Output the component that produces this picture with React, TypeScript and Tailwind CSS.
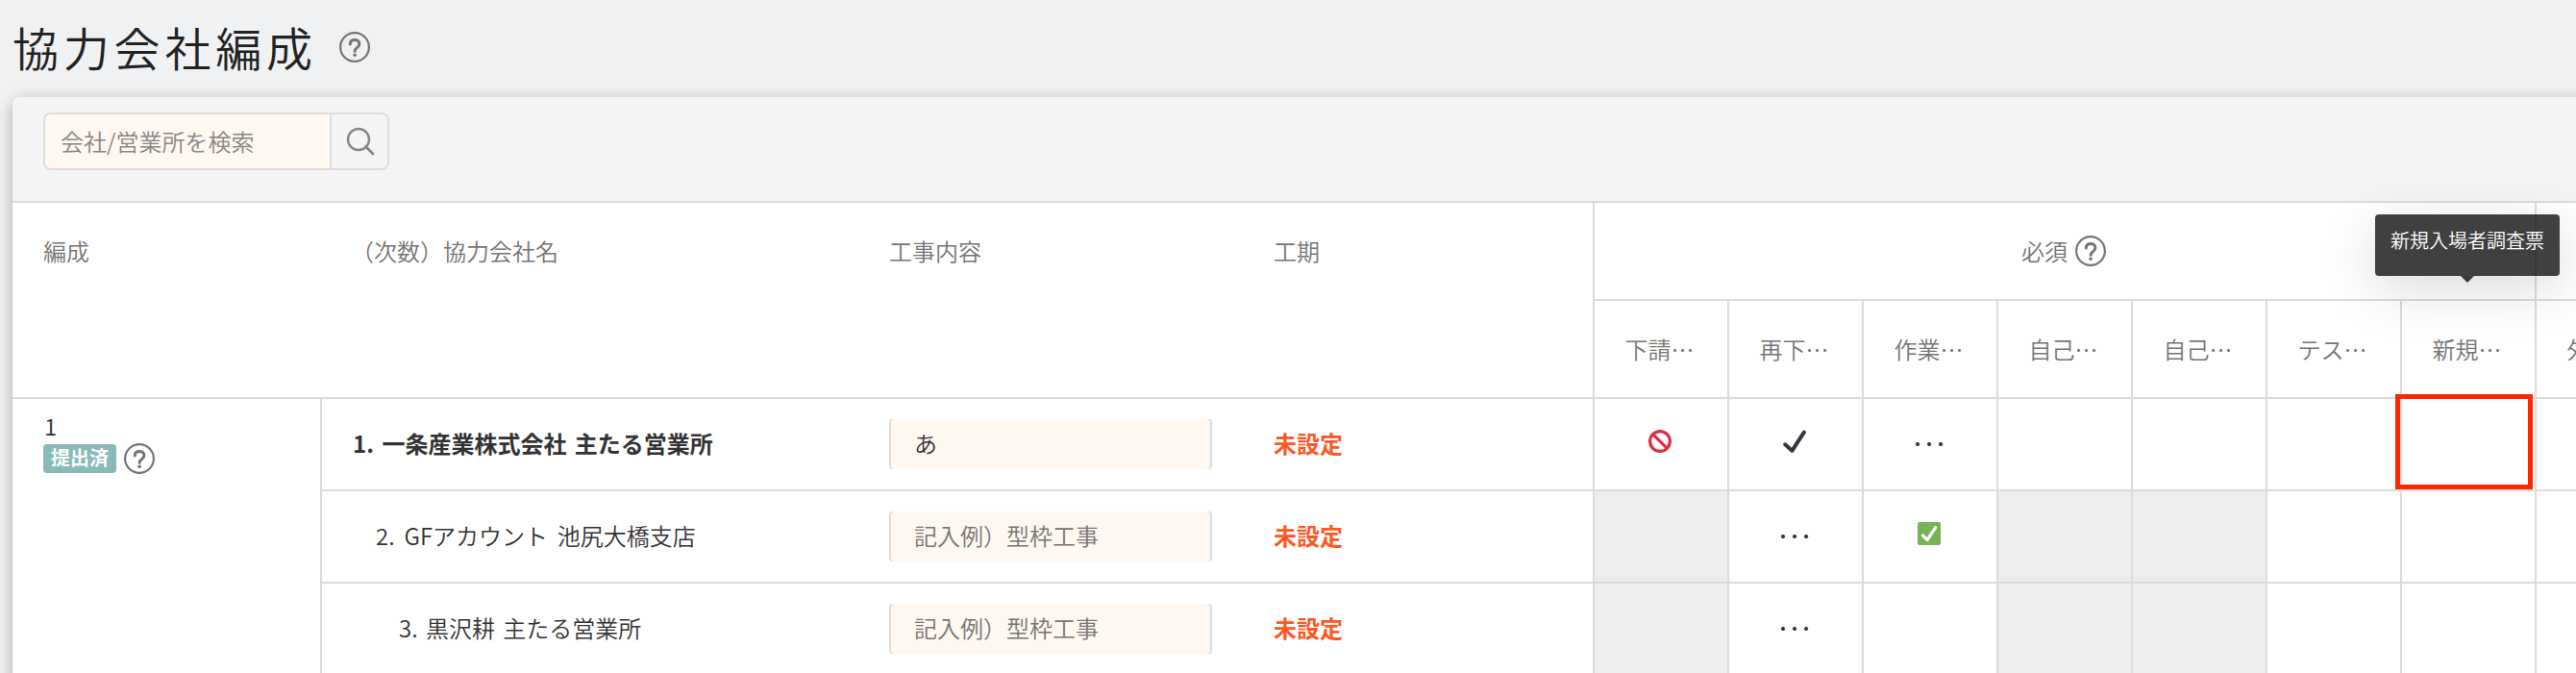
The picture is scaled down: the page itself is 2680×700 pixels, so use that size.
import { ReactNode } from "react"
import { clsx } from "clsx"

type CellValue = "" | "banned" | "check" | "done" | "dots" | "disabled"

type Company = {
  name: string
  level: number
  work: string
  cells: CellValue[]
}

const columns = ["下請…", "再下…", "作業…", "自己…", "自己…", "テス…", "新規…", "外国…"]

const companies: Company[] = [
  {
    name: "1. 一条産業株式会社 主たる営業所",
    level: 0,
    work: "あ",
    cells: ["banned", "check", "dots", "", "", "", "", ""],
  },
  {
    name: "2. GFアカウント 池尻大橋支店",
    level: 1,
    work: "",
    cells: ["disabled", "dots", "done", "disabled", "disabled", "", "", ""],
  },
  {
    name: "3. 黒沢耕 主たる営業所",
    level: 2,
    work: "",
    cells: ["disabled", "dots", "", "disabled", "disabled", "", "", ""],
  },
]

const indent = [
  "pl-8 font-bold [word-spacing:3px]",
  "pl-14 [word-spacing:4.5px]",
  "pl-20 [word-spacing:3px]",
]

const HelpIcon = () => (
  <svg width="32" height="32" viewBox="0 0 32 32" fill="none" className="shrink-0">
    <circle cx="16" cy="16" r="14.9" stroke="#757575" strokeWidth="2.2" />
    <path
      d="M11.3 13c0-2.8 2-4.4 4.8-4.4s4.8 1.6 4.8 4.1c0 2-1 2.9-2.3 3.9-1.5 1.1-2.5 1.8-2.5 3.6"
      stroke="#757575"
      strokeWidth="3"
      strokeLinecap="round"
    />
    <circle cx="16.1" cy="24.3" r="1.8" fill="#757575" />
  </svg>
)

const SearchIcon = () => (
  <svg width="30" height="30" viewBox="0 0 30 30" fill="none" stroke="#868686" strokeWidth="2.4">
    <circle cx="13" cy="13" r="11" />
    <path d="M20.5 20.5 28 28" strokeWidth="2.8" strokeLinecap="round" />
  </svg>
)

const BannedIcon = () => (
  <svg width="24" height="24" viewBox="0 0 24 24" fill="none" stroke="#dd2e44" strokeWidth="3.2">
    <circle cx="12" cy="12" r="10.4" />
    <path d="m4.8 4.8 14.4 14.4" />
  </svg>
)

const CheckIcon = () => (
  <svg width="24" height="24" viewBox="0 0 36 36" fill="#31373d">
    <path d="M34.459 1.375c-1.391-.902-3.248-.506-4.149.884L13.5 28.17l-8.198-7.58c-1.217-1.125-3.114-1.051-4.239.166-1.125 1.216-1.051 3.114.166 4.239l10.764 9.952s.309.266.452.359c.504.328 1.07.484 1.63.484.982 0 1.945-.482 2.52-1.368L35.343 5.524c.902-1.39.506-3.248-.884-4.149z" />
  </svg>
)

const DoneIcon = () => (
  <svg width="24" height="24" viewBox="0 0 36 36">
    <rect width="36" height="36" rx="3.5" fill="#77b255" />
    <path
      fill="#fff"
      d="M29.28 6.362c-1.156-.751-2.704-.422-3.458.736L14.936 23.877l-5.029-4.65c-1.014-.938-2.596-.875-3.533.138-.937 1.014-.875 2.596.139 3.533l7.209 6.666c.48.445 1.09.665 1.696.665.673 0 1.534-.282 2.099-1.139.332-.506 12.5-19.27 12.5-19.27.751-1.159.421-2.707-.737-3.458z"
    />
  </svg>
)

const cellContent: Record<CellValue, ReactNode> = {
  "": null,
  banned: <BannedIcon />,
  check: <CheckIcon />,
  done: <DoneIcon />,
  dots: <span className="pt-[3px] leading-6 font-normal text-[#333]">･･･</span>,
  disabled: null,
}

const Tooltip = ({ label }: { label: string }) => (
  <div className="absolute -top-[90px] -left-[28px] z-10 h-16 w-48 rounded bg-black/75 px-4 pt-3 text-xl leading-[29px] whitespace-nowrap text-white shadow-[0_14px_56px_rgba(0,0,0,0.15)]">
    {label}
    <div className="absolute top-full left-1/2 -translate-x-1/2 border-x-[7px] border-t-[7px] border-x-transparent border-t-black/75" />
  </div>
)

const CompanyRow = ({ company }: { company: Company }) => (
  <div className="flex h-24 border-b-2 border-[#dcdcdc]">
    <div className={clsx("flex w-[558px] shrink-0 items-center pb-[3px]", indent[company.level])}>
      {company.name}
    </div>
    <div className="flex w-[400px] shrink-0 items-center pl-8">
      <div className="h-[52px] w-[336px] overflow-hidden">
        <input
          type="text"
          defaultValue={company.work}
          placeholder="記入例）型枠工事"
          className="-mt-0.5 h-14 w-full rounded-md border-2 border-[#dcdcdc] bg-[#fff8f1] px-6 pb-[3px] placeholder:text-[#757575]"
        />
      </div>
    </div>
    <div className="flex w-[364px] shrink-0 items-center pb-[3px] pl-8 font-bold text-[#ff5722]">未設定</div>
    {company.cells.map((cell, i) => (
      <div
        key={i}
        className={clsx(
          "flex w-[140px] shrink-0 items-center justify-center border-l-2 border-[#dcdcdc] pr-0.5 pb-1.5",
          cell === "disabled" && "bg-[#ededed]"
        )}
      >
        {cellContent[cell]}
      </div>
    ))}
  </div>
)

const TableHeader = () => (
  <div className="flex h-[204px] border-b-2 border-[#dcdcdc] text-[#757575]">
    <div className="w-[322px] shrink-0 pt-8 pl-8 leading-9">編成</div>
    <div className="w-[558px] shrink-0 pt-8 pl-[30px] leading-9">（次数）協力会社名</div>
    <div className="w-[400px] shrink-0 pt-8 pl-8 leading-9">工事内容</div>
    <div className="w-[364px] shrink-0 pt-8 pl-8 leading-9">工期</div>
    <div className="shrink-0">
      <div className="flex h-[102px] border-b-2 border-[#dcdcdc]">
        <div className="flex w-[980px] items-center justify-center gap-2 border-l-2 border-[#dcdcdc] pr-0.5">
          必須
          <HelpIcon />
        </div>
        <div className="w-[140px] border-l-2 border-[#dcdcdc]" />
      </div>
      <div className="flex h-[100px]">
        {columns.map((column, i) => (
          <div
            key={i}
            className="relative flex w-[140px] shrink-0 items-center justify-center border-l-2 border-[#dcdcdc] pr-[3px]"
          >
            {column}
            {i === 6 && (
              <>
                <Tooltip label="新規入場者調査票" />
                <div className="absolute top-[97px] -left-[7px] z-10 h-[99px] w-[143px] border-[5px] border-[#ff2600]" />
              </>
            )}
          </div>
        ))}
      </div>
    </div>
  </div>
)

const App = () => {
  return (
    <div className="h-[700px] w-[2680px] overflow-hidden bg-[#eff1f3] pl-[13px] font-['Noto_Sans_CJK_JP',sans-serif] text-2xl font-[350] text-[#333]">
      <div className="flex h-[101px] items-center gap-[23px] pb-[3px]">
        <h1 className="pb-[3px] text-5xl tracking-[4.8px] text-[#222]">協力会社編成</h1>
        <HelpIcon />
      </div>

      <div className="h-[620px] w-[2800px] overflow-hidden rounded-lg bg-white shadow-[0_4px_16px_rgba(0,0,0,0.28)]">
        <div className="h-[110px] border-b-2 border-[#dcdcdc] bg-[#f4f4f4] px-8 pt-4">
          <div className="flex h-[60px] w-[360px] overflow-hidden rounded-lg border-2 border-[#dcdcdc]">
            <input
              type="text"
              placeholder="会社/営業所を検索"
              className="w-[296px] bg-[#fff8f1] px-4 placeholder:text-[#868686]"
            />
            <button className="flex flex-1 items-center justify-center border-l-2 border-[#dcdcdc] bg-[#f2f4f6] pl-0.5">
              <SearchIcon />
            </button>
          </div>
        </div>

        <TableHeader />

        <div className="flex">
          <div className="w-[320px] shrink-0 pt-3 pl-8">
            <div className="pl-px leading-[32px]">1</div>
            <div className="flex items-center gap-2 pt-0.5">
              <span className="h-[30px] rounded bg-[#87bab9] px-2 text-xl leading-[27px] font-bold text-white">
                提出済
              </span>
              <HelpIcon />
            </div>
          </div>
          <div className="border-l-2 border-[#dcdcdc]">
            {companies.map((company) => (
              <CompanyRow key={company.name} company={company} />
            ))}
          </div>
        </div>
      </div>
    </div>
  )
}

export default App
